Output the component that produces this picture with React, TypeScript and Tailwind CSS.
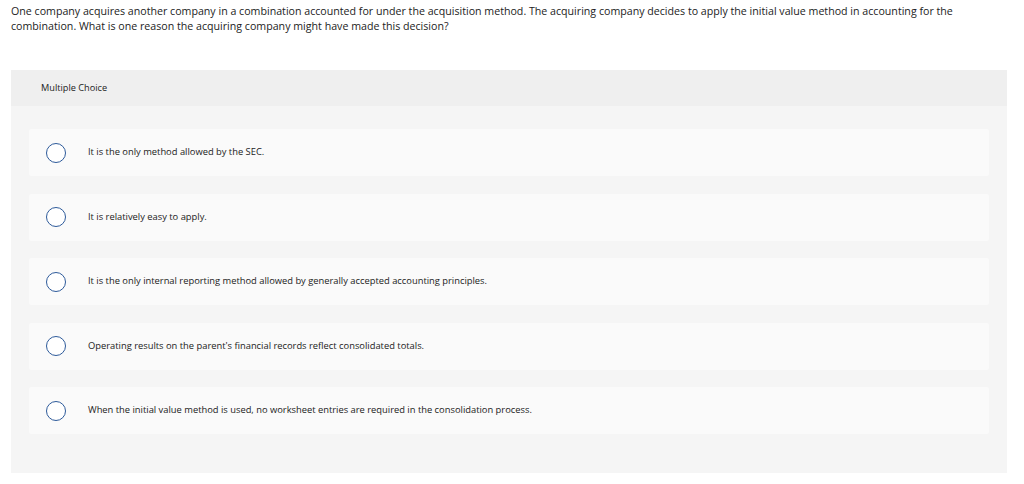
import React from "react";

const options = [
  "It is the only method allowed by the SEC.",
  "It is relatively easy to apply.",
  "It is the only internal reporting method allowed by generally accepted accounting principles.",
  "Operating results on the parent's financial records reflect consolidated totals.",
  "When the initial value method is used, no worksheet entries are required in the consolidation process.",
];

export default function App() {
  return (
    <div
      className="w-[1024px] h-[484px] bg-white text-[#222222]"
      style={{ fontFamily: "'Open Sans', 'Liberation Sans', sans-serif" }}
    >
      <div className="pl-[11px] pr-[40px] pt-[4px] text-[10.65px] leading-[15px]">
        One company acquires another company in a combination accounted for under the acquisition method. The acquiring company decides to apply the initial value method in accounting for the combination. What is one reason the acquiring company might have made this decision?
      </div>
      <div className="ml-[11px] mt-[36px] w-[996px] h-[403px] bg-[#f5f5f5]">
        <div className="h-[36px] bg-[#efefef] flex items-center pl-[30px] text-[9.2px]">
          Multiple Choice
        </div>
        <div className="flex flex-col gap-[17.5px] pt-[23px] px-[18px]">
          {options.map((o) => (
            <div key={o} className="h-[47px] bg-[#fafafa] rounded-[2px] flex items-center">
              <div className="ml-[17px] w-[20px] h-[20px] rounded-full border border-[#2d5a9a] bg-white shrink-0" />
              <div className="ml-[22px] text-[9.35px]">{o}</div>
            </div>
          ))}
        </div>
      </div>
    </div>
  );
}
